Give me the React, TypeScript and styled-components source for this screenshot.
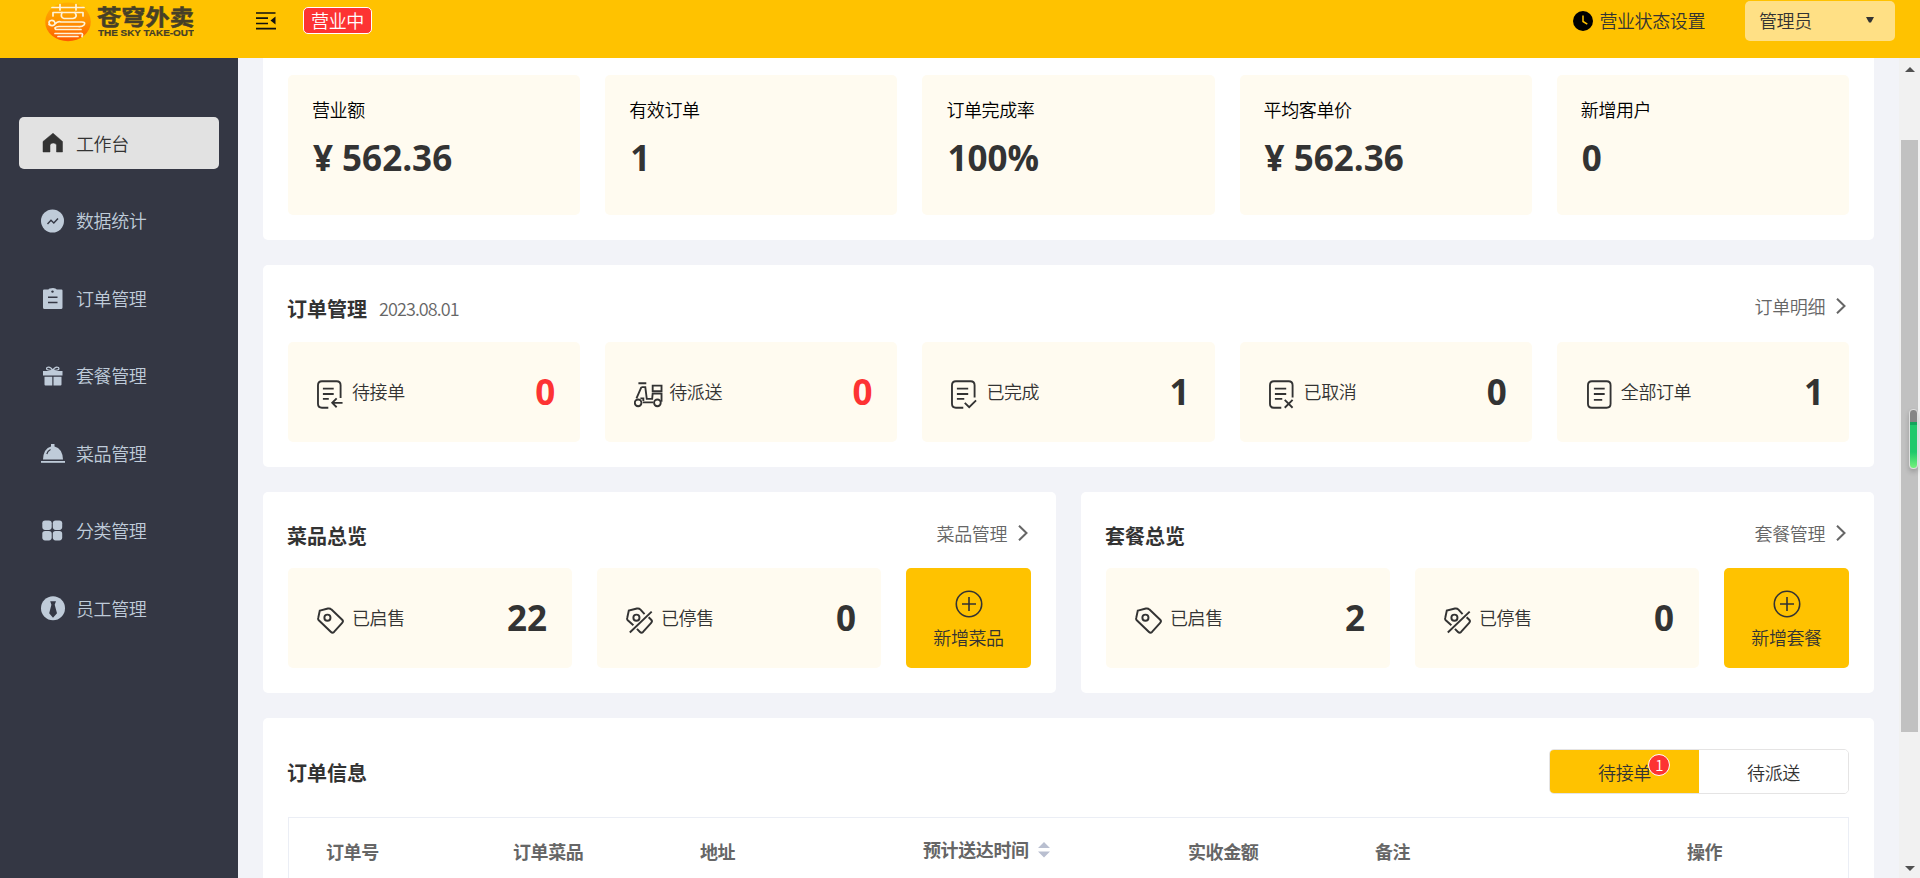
import React from 'react';
import styled, { createGlobalStyle } from 'styled-components';

const GlobalStyle = createGlobalStyle`
  * { box-sizing: border-box; }
  body {
    margin: 0;
    overflow: hidden;
    font-family: "Noto Sans CJK SC", sans-serif;
    font-size: 18px;
    font-weight: 350;
    letter-spacing: -0.4px;
    line-height: 26px;
    color: #333;
    background: #f2f3f8;
  }
  svg { display: block; flex: none; }
`;

const Page = styled.div`
  display: flex;
  flex-direction: column;
  height: 878px;
  overflow: hidden;
`;

const Header = styled.header`
  display: flex;
  align-items: flex-start;
  height: 58px;
  flex: none;
  padding-left: 45px;
  padding-right: 25px;
  background: #ffc200;
`;

const MenuToggle = styled.div`
  margin: 12px 0 0 62px;
`;

const OpenTag = styled.div`
  display: flex;
  align-items: center;
  justify-content: center;
  width: 69px;
  height: 27px;
  margin: 7px 0 0 27px;
  border: 1px solid #fff;
  border-radius: 5px;
  background: #fd3333;
  color: #fff;
  line-height: 25px;
`;

const StatusSetting = styled.div`
  display: flex;
  align-items: center;
  gap: 6px;
  height: 42px;
  margin-left: auto;
`;

const HeaderText = styled.span`
  margin-top: -2px;
`;

const AccountSelect = styled.div`
  display: flex;
  align-items: center;
  justify-content: space-between;
  width: 150px;
  height: 40px;
  margin: 1px 0 0 40px;
  padding: 0 21px 0 14px;
  border-radius: 5px;
  background: #ffe085;
`;

const Body = styled.div`
  display: flex;
  flex: 1;
  min-height: 0;
`;

const Sidebar = styled.nav`
  display: flex;
  flex-direction: column;
  gap: 25.5px;
  width: 238px;
  flex: none;
  padding: 59px 19px 0;
  background: #343744;
`;

const NavItem = styled.div<{ $active?: boolean }>`
  display: flex;
  align-items: center;
  gap: 9px;
  height: 52px;
  flex: none;
  padding-left: 20px;
  border-radius: 5px;
  background: ${(p) => (p.$active ? '#e2e2e2' : 'transparent')};
  color: ${(p) => (p.$active ? '#333' : '#bfcbd9')};
`;

const NavLabel = styled.span`
  margin-top: -1px;
`;

const Content = styled.main`
  display: flex;
  flex-direction: column;
  gap: 25px;
  flex: 1;
  min-width: 0;
  padding: 0 25px;
  overflow: hidden;
`;

const Card = styled.section`
  flex: none;
  padding: 0 25px 25px;
  border-radius: 5px;
  background: #fff;
`;

const DataCard = styled(Card)`
  padding-top: 17px;
  border-radius: 0 0 5px 5px;
`;

const CardHead = styled.div<{ $height: number }>`
  display: flex;
  align-items: center;
  height: ${(p) => p.$height}px;
`;

const OverviewHead = styled(CardHead)`
  padding-top: 2px;
`;

const Title = styled.h2`
  margin: 10px 0 0 -1px;
  font-size: 20px;
  font-weight: 700;
  letter-spacing: 0;
`;

const DateText = styled.span`
  margin: 9px 0 0 12px;
  color: #666;
  letter-spacing: -0.9px;
`;

const MoreLink = styled.a`
  display: flex;
  align-items: center;
  gap: 11px;
  margin: 4px 3px 0 auto;
  color: #666;
`;

const FiveColumns = styled.div`
  display: grid;
  grid-template-columns: repeat(5, 1fr);
  gap: 25px;
`;

const OverviewColumns = styled.div`
  display: grid;
  grid-template-columns: 1fr 1fr 125px;
  gap: 25px;
`;

const Split = styled.div`
  display: grid;
  grid-template-columns: 1fr 1fr;
  gap: 25px;
  flex: none;
`;

const MetricBox = styled.div`
  height: 140px;
  padding: 21px 24px;
  border-radius: 5px;
  background: #fffbf0;
`;

const MetricLabel = styled.div`
  color: #000;
`;

const Figure = styled.span<{ $alert?: boolean }>`
  font-family: "Open Sans", "Noto Sans", sans-serif;
  font-size: 35px;
  font-weight: 700;
  line-height: 48px;
  letter-spacing: 0;
  color: ${(p) => (p.$alert ? '#fd3333' : '#333')};
`;

const MetricFigure = styled(Figure)`
  display: block;
  margin: 12px 0 0 1px;
`;

const StatusBox = styled.div`
  display: flex;
  align-items: center;
  height: 100px;
  padding: 0 25px 0 29px;
  border-radius: 5px;
  background: #fffbf0;
  svg { margin: 4px 6px 0 0; }
  ${Figure} { margin-left: auto; margin-top: -1px; }
`;

const StatusLabel = styled.span`
  margin-top: -3px;
`;

const AddButton = styled.button`
  display: flex;
  flex-direction: column;
  align-items: center;
  gap: 6px;
  height: 100px;
  padding: 22px 0 0;
  border: 0;
  border-radius: 5px;
  background: #ffc200;
  color: #333;
  font: inherit;
  letter-spacing: inherit;
`;

const TabGroup = styled.div`
  display: flex;
  width: 300px;
  height: 45px;
  margin: 7px 0 0 auto;
  border: 1px solid #e5e4e4;
  border-radius: 5px;
  overflow: hidden;
`;

const Tab = styled.div<{ $active?: boolean }>`
  display: flex;
  align-items: center;
  justify-content: center;
  flex: 1;
  padding-top: 2px;
  background: ${(p) => (p.$active ? '#ffc200' : '#fff')};
`;

const TabText = styled.span`
  position: relative;
`;

const Badge = styled.sup`
  position: absolute;
  left: 50px;
  top: -5px;
  width: 22px;
  height: 22px;
  border: 1px solid #fff;
  border-radius: 50%;
  background: #fd3333;
  color: #fff;
  font-size: 15px;
  line-height: 20px;
  text-align: center;
`;

const Table = styled.div`
  display: grid;
  grid-template-columns: 187px 187px 223px 265px 187px 312px 1fr;
  height: 90px;
  padding: 18px 0 0 37px;
  border: 1px solid #ebeef5;
  color: #666;
  font-weight: 700;
`;

const HeadCell = styled.div<{ $sortable?: boolean }>`
  display: flex;
  align-items: flex-start;
  gap: 9px;
  padding-top: ${(p) => (p.$sortable ? 0 : 2)}px;
  svg { margin-top: 6px; }
`;

const ScrollTrack = styled.div`
  position: relative;
  display: flex;
  flex-direction: column;
  align-items: center;
  width: 21px;
  flex: none;
  padding: 9px 0 7px;
  background: #f1f1f1;
`;

const ScrollThumb = styled.div`
  width: 17px;
  height: 592px;
  margin: 68px 0 auto;
  background: #c1c1c1;
`;

const Gauge = styled.div`
  position: absolute;
  right: 2px;
  top: 351px;
  width: 9px;
  height: 60px;
  border: 1px solid #dedede;
  border-radius: 4px;
  background: linear-gradient(#858585 0 12px, #12a55c 12px 15px, #1fc96c 15px 42px, #76f27c 100%);
  box-shadow: 0 3px 5px rgba(0, 0, 0, 0.2);
`;

const Logo = () => (
  <svg width="149" height="42" viewBox="45 0 149 42">
    <defs>
      <linearGradient id="sun" x1="0" y1="0" x2="0" y2="1">
        <stop offset="0" stopColor="#ffb000" />
        <stop offset="0.5" stopColor="#ff9200" />
        <stop offset="1" stopColor="#ff5a00" />
      </linearGradient>
    </defs>
    <ellipse cx="68" cy="21.8" rx="22.8" ry="19.4" fill="url(#sun)" />
    <g fill="none" stroke="#fff3d8" strokeWidth="1.7" strokeLinecap="round" strokeLinejoin="round">
      <path d="M52 7.5H84M60 4.5V10M76 4.500V10" />
      <path d="M53 16V12.500H83V16" />
      <path d="M62 12.500Q60 17.500 64 18.500H73Q78 17.500 75 12.500" />
      <path d="M50 24.800Q47.500 21.500 51 20.500Q55 20 55 24Q53 27 49 24.500M55 24Q58 20.500 61 22H82Q86 22 84 25Q82 27 78 26.500H59Q53 27 56 29.500H81" />
      <path d="M55 33.500H79Q84 32.500 82 36.500M58 36.500H78" />
    </g>
    <text x="97" y="24.500" fontSize="22" fontWeight="700" fill="#463f27" stroke="#463f27" strokeWidth="0.5" textLength="97" lengthAdjust="spacingAndGlyphs" fontFamily="Noto Sans CJK SC, sans-serif" letterSpacing="0">苍穹外卖</text>
    <text x="98" y="36" fontSize="8.400" fontWeight="700" fill="#463f27" stroke="#463f27" strokeWidth="0.2" textLength="96" lengthAdjust="spacingAndGlyphs" fontFamily="Liberation Sans, sans-serif" letterSpacing="0">THE SKY TAKE-OUT</text>
  </svg>
);

const FoldIcon = () => (
  <svg width="20" height="18" viewBox="0 0 20 18">
    <path d="M0 1H19.500M0 6.200H12M0 11.500H12M0 16.700H20" stroke="#111" strokeWidth="1.700" />
    <path d="M19.500 4.500V12.500L14.500 8.500Z" fill="#111" />
  </svg>
);

const ClockIcon = () => (
  <svg width="20" height="20" viewBox="0 0 20 20">
    <circle cx="10" cy="10" r="10" fill="#000" />
    <path d="M10 4.500V10.500L14.300 13.200" fill="none" stroke="#ffc200" strokeWidth="1.500" />
  </svg>
);

const CaretIcon = () => (
  <svg width="8" height="8" viewBox="0 0 8 8">
    <path d="M0 0H8L5 5.500H3Z" fill="#333" />
  </svg>
);

const ChevronIcon = () => (
  <svg width="10" height="16" viewBox="0 0 10 16">
    <path d="M1 0.700L8.500 8L1 15.300" fill="none" stroke="#666" strokeWidth="2" />
  </svg>
);

const NAV_ICONS: Record<string, React.ReactNode> = {
  home: <path d="M14 4.200L23.500 12.500V23H17.500V16.500Q17.500 14 14.200 14Q11 14 11 16.500V23H4V12.500Z" fill="#333" stroke="#333" strokeWidth="0.500" strokeLinejoin="round" />,
  stats: (
    <>
      <circle cx="13.500" cy="14" r="11.500" />
      <path d="M8.500 17L12 13.300L14.800 16L19 11.500" fill="none" stroke="#343744" strokeWidth="1.400" />
    </>
  ),
  order: (
    <>
      <path d="M5 5.500H9.500Q10 4 14 4Q17 4 17.800 5.500H22.500Q23.500 5.500 23.500 6.500V23.500Q23.500 25 22 25H5.500Q4 25 4 23.500V6.500Q4 5.500 5 5.500Z" />
      <circle cx="13.500" cy="7.600" r="1.200" fill="#343744" />
      <path d="M9 13.200H18.500M9 18.500H18.500" stroke="#343744" strokeWidth="1.400" />
    </>
  ),
  gift: (
    <>
      <path d="M4 9H23.500V13.500H4ZM5.500 14.700H13.300V23.500H6.500Q5.500 23.500 5.500 22.500ZM14.500 14.700H22.500V22.500Q22.500 23.500 21.500 23.500H14.500Z" />
      <path d="M13.800 8.500Q11.500 4.200 8 5.500Q6 8.500 13.800 8.500Q21.500 8.500 19.500 5.500Q16 4.200 13.800 8.500Z" fill="none" stroke="#bfcbd9" strokeWidth="1.300" />
    </>
  ),
  dish: (
    <>
      <path d="M12 7.500V5H15.500V7.500Q23.500 9.500 24 20.500H4Q4.500 9.500 12 7.500Z" />
      <path d="M2 22H26V23.800H2Z" />
      <path d="M7.800 15Q8.500 12 11.500 10.500" fill="none" stroke="#343744" strokeWidth="1.200" />
    </>
  ),
  grid: (
    <>
      <rect x="3.300" y="3.500" width="9.400" height="9.400" rx="2.800" />
      <rect x="13.800" y="3.500" width="9.400" height="9.400" rx="2.800" />
      <rect x="3.300" y="14" width="9.400" height="9.400" rx="2.800" />
      <rect x="13.800" y="14" width="9.400" height="9.400" rx="2.800" />
    </>
  ),
  staff: (
    <>
      <circle cx="14" cy="14.300" r="12" />
      <path d="M11.200 7.300H17L15.700 10.800L18 19.300L14 23.800L10.200 19.300L12.400 10.800Z" fill="#343744" />
    </>
  ),
};

const NavIcon = ({ name }: { name: string }) => (
  <svg width="28" height="28" viewBox="0 0 28 28" fill="#bfcbd9">{NAV_ICONS[name]}</svg>
);

const STATUS_ICONS: Record<string, React.ReactNode> = {
  accept: <path d="M24 18V5Q24 1 20 1H5Q1 1 1 5V24Q1 28 5 28H11.500M6 8.500H17M6 14H17M6 19H12M26 23H16M20 18.500L15.500 23L20 27.500" />,
  scooter: (
    <>
      <path d="M4.500 3H12.500M7.500 7H11.500L13 19H18.500L19 13.500H28V22M7.500 7L2.500 18.500M19 5.500H28V11H19ZM9 22.500H19.500M6.500 18.500H9.500V21" />
      <circle cx="4.200" cy="23" r="3.400" />
      <circle cx="23.800" cy="23" r="3.400" />
    </>
  ),
  done: <path d="M24 17.500V5Q24 1 20 1H5Q1 1 1 5V24Q1 28 5 28H12.500M6 8.500H17.500M6 14H17.500M6 19H13.500M14 23L18.500 27.500L25.500 20.500" />,
  cancel: <path d="M24 17.500V5Q24 1 20 1H5Q1 1 1 5V24Q1 28 5 28H12.500M6 8.500H17.500M6 14H17.500M6 19H13.500M16 20L24 28M24 20L16 28" />,
  all: <path d="M6 1H21Q25 1 25 5V24Q25 28 21 28H6Q2 28 2 24V5Q2 1 6 1ZM8 8.500H19M8 14H19M8 20H16.500" />,
  tag: (
    <>
      <path d="M3.500 4L11.500 2Q13.500 1.500 15 3L25.500 13Q27 14.500 25.500 16L17.500 25Q16 26.500 14.500 25L2.500 13.500Q1.500 12.500 2 11Z" />
      <circle cx="11" cy="11" r="3" />
    </>
  ),
  tagOff: (
    <>
      <path d="M8 18.500L2.500 13.500Q1.500 12.500 2 11L3.500 4L11.500 2Q13.500 1.500 15 3L19 7.500M23 10.500L25.500 13Q27 14.500 25.500 16L17.500 25Q16 26.500 14.500 25L11.500 22M4.500 25.500L26 5" />
      <circle cx="11" cy="11" r="3" />
    </>
  ),
};

const ICON_BOX: Record<string, string> = { tag: '0.750 -0.500 28.500 28.500', tagOff: '0.750 -0.500 28.500 28.500' };

const StatusIcon = ({ name }: { name: string }) => (
  <svg width="29" height="29" viewBox={ICON_BOX[name] ?? '0 -0.250 29.500 29.500'} fill="none" stroke="#333" strokeWidth="1.900">{STATUS_ICONS[name]}</svg>
);

const AddIcon = () => (
  <svg width="28" height="28" viewBox="0 0 28 28" fill="none" stroke="#333" strokeWidth="1.600">
    <circle cx="14" cy="14" r="12.700" />
    <path d="M14 7V21M7 14H21" />
  </svg>
);

const SortIcon = () => (
  <svg width="12" height="16" viewBox="0 0 12 16" fill="#b9bfd0">
    <path d="M6 0L12 6H0ZM0 9.500H12L6 15.500Z" />
  </svg>
);

const ArrowUp = () => (
  <svg width="10" height="5" viewBox="0 0 10 5"><path d="M5 0L10 5H0Z" fill="#505050" /></svg>
);
const ArrowDown = () => (
  <svg width="10" height="5" viewBox="0 0 10 5"><path d="M0 0H10L5 5Z" fill="#505050" /></svg>
);

const NAV = [
  ['home', '工作台'],
  ['stats', '数据统计'],
  ['order', '订单管理'],
  ['gift', '套餐管理'],
  ['dish', '菜品管理'],
  ['grid', '分类管理'],
  ['staff', '员工管理'],
];

const METRICS = [
  ['营业额', '¥ 562.36'],
  ['有效订单', '1'],
  ['订单完成率', '100%'],
  ['平均客单价', '¥ 562.36'],
  ['新增用户', '0'],
];

const ORDERS = [
  { icon: 'accept', label: '待接单', count: 0, alert: true },
  { icon: 'scooter', label: '待派送', count: 0, alert: true },
  { icon: 'done', label: '已完成', count: 1 },
  { icon: 'cancel', label: '已取消', count: 0 },
  { icon: 'all', label: '全部订单', count: 1 },
];

const OVERVIEWS = [
  { title: '菜品总览', link: '菜品管理', on: 22, off: 0, add: '新增菜品' },
  { title: '套餐总览', link: '套餐管理', on: 2, off: 0, add: '新增套餐' },
];

const COLUMNS = ['订单号', '订单菜品', '地址', '预计送达时间', '实收金额', '备注', '操作'];

interface StatusProps {
  icon: string;
  label: string;
  count: number;
  alert?: boolean;
}

const Status = ({ icon, label, count, alert }: StatusProps) => (
  <StatusBox>
    <StatusIcon name={icon} />
    <StatusLabel>{label}</StatusLabel>
    <Figure $alert={alert}>{count}</Figure>
  </StatusBox>
);

export default function App() {
  return (
    <Page>
      <GlobalStyle />
      <Header>
        <Logo />
        <MenuToggle><FoldIcon /></MenuToggle>
        <OpenTag>营业中</OpenTag>
        <StatusSetting><ClockIcon /><HeaderText>营业状态设置</HeaderText></StatusSetting>
        <AccountSelect><HeaderText>管理员</HeaderText><CaretIcon /></AccountSelect>
      </Header>
      <Body>
        <Sidebar>
          {NAV.map(([icon, label], i) => (
            <NavItem key={icon} $active={i === 0}>
              <NavIcon name={icon} />
              <NavLabel>{label}</NavLabel>
            </NavItem>
          ))}
        </Sidebar>
        <Content>
          <DataCard>
            <FiveColumns>
              {METRICS.map(([label, value]) => (
                <MetricBox key={label}>
                  <MetricLabel>{label}</MetricLabel>
                  <MetricFigure>{value}</MetricFigure>
                </MetricBox>
              ))}
            </FiveColumns>
          </DataCard>
          <Card>
            <CardHead $height={77}>
              <Title>订单管理</Title>
              <DateText>2023.08.01</DateText>
              <MoreLink>订单明细<ChevronIcon /></MoreLink>
            </CardHead>
            <FiveColumns>
              {ORDERS.map((o) => <Status key={o.label} {...o} />)}
            </FiveColumns>
          </Card>
          <Split>
            {OVERVIEWS.map((o) => (
              <Card key={o.title}>
                <OverviewHead $height={76}>
                  <Title>{o.title}</Title>
                  <MoreLink>{o.link}<ChevronIcon /></MoreLink>
                </OverviewHead>
                <OverviewColumns>
                  <Status icon="tag" label="已启售" count={o.on} />
                  <Status icon="tagOff" label="已停售" count={o.off} />
                  <AddButton><AddIcon />{o.add}</AddButton>
                </OverviewColumns>
              </Card>
            ))}
          </Split>
          <Card>
            <CardHead $height={99}>
              <Title>订单信息</Title>
              <TabGroup>
                <Tab $active><TabText>待接单<Badge>1</Badge></TabText></Tab>
                <Tab>待派送</Tab>
              </TabGroup>
            </CardHead>
            <Table>
              {COLUMNS.map((c) => (
                <HeadCell key={c} $sortable={c === '预计送达时间'}>
                  {c}
                  {c === '预计送达时间' && <SortIcon />}
                </HeadCell>
              ))}
            </Table>
          </Card>
        </Content>
        <ScrollTrack>
          <ArrowUp />
          <ScrollThumb />
          <ArrowDown />
          <Gauge />
        </ScrollTrack>
      </Body>
    </Page>
  );
}
